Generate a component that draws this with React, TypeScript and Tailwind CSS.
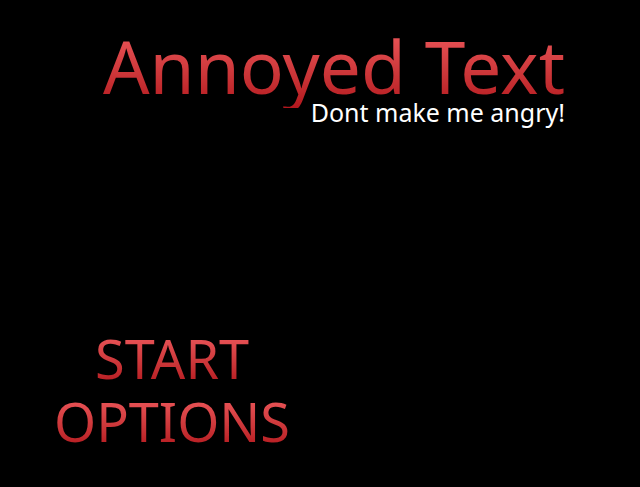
const redText =
  'bg-gradient-to-b from-[#f05a5e] to-[#b3161d] bg-clip-text text-transparent'

export default function App() {
  return (
    <div
      className="flex flex-col w-full h-[487px] bg-black overflow-hidden"
      style={{fontFamily: '"Noto Sans", sans-serif'}}>
      {/* title block: subtitle tucks under the title's descenders */}
      <div className="flex flex-col items-end pr-[75px] pt-[24px]">
        <h1 className={`text-[73px] leading-[84px] ${redText}`}>Annoyed Text</h1>
        <p className="-mt-[11px] text-[25px] leading-[30px] text-white">Dont make me angry!</p>
      </div>

      {/* menu */}
      <div className="flex flex-col items-center gap-[7px] w-[344px] mt-auto mb-[38px]">
        <button className={`text-[54px] leading-[56px] ${redText}`}>START</button>
        <button className={`text-[54px] leading-[56px] ${redText}`}>OPTIONS</button>
      </div>
    </div>
  )
}
